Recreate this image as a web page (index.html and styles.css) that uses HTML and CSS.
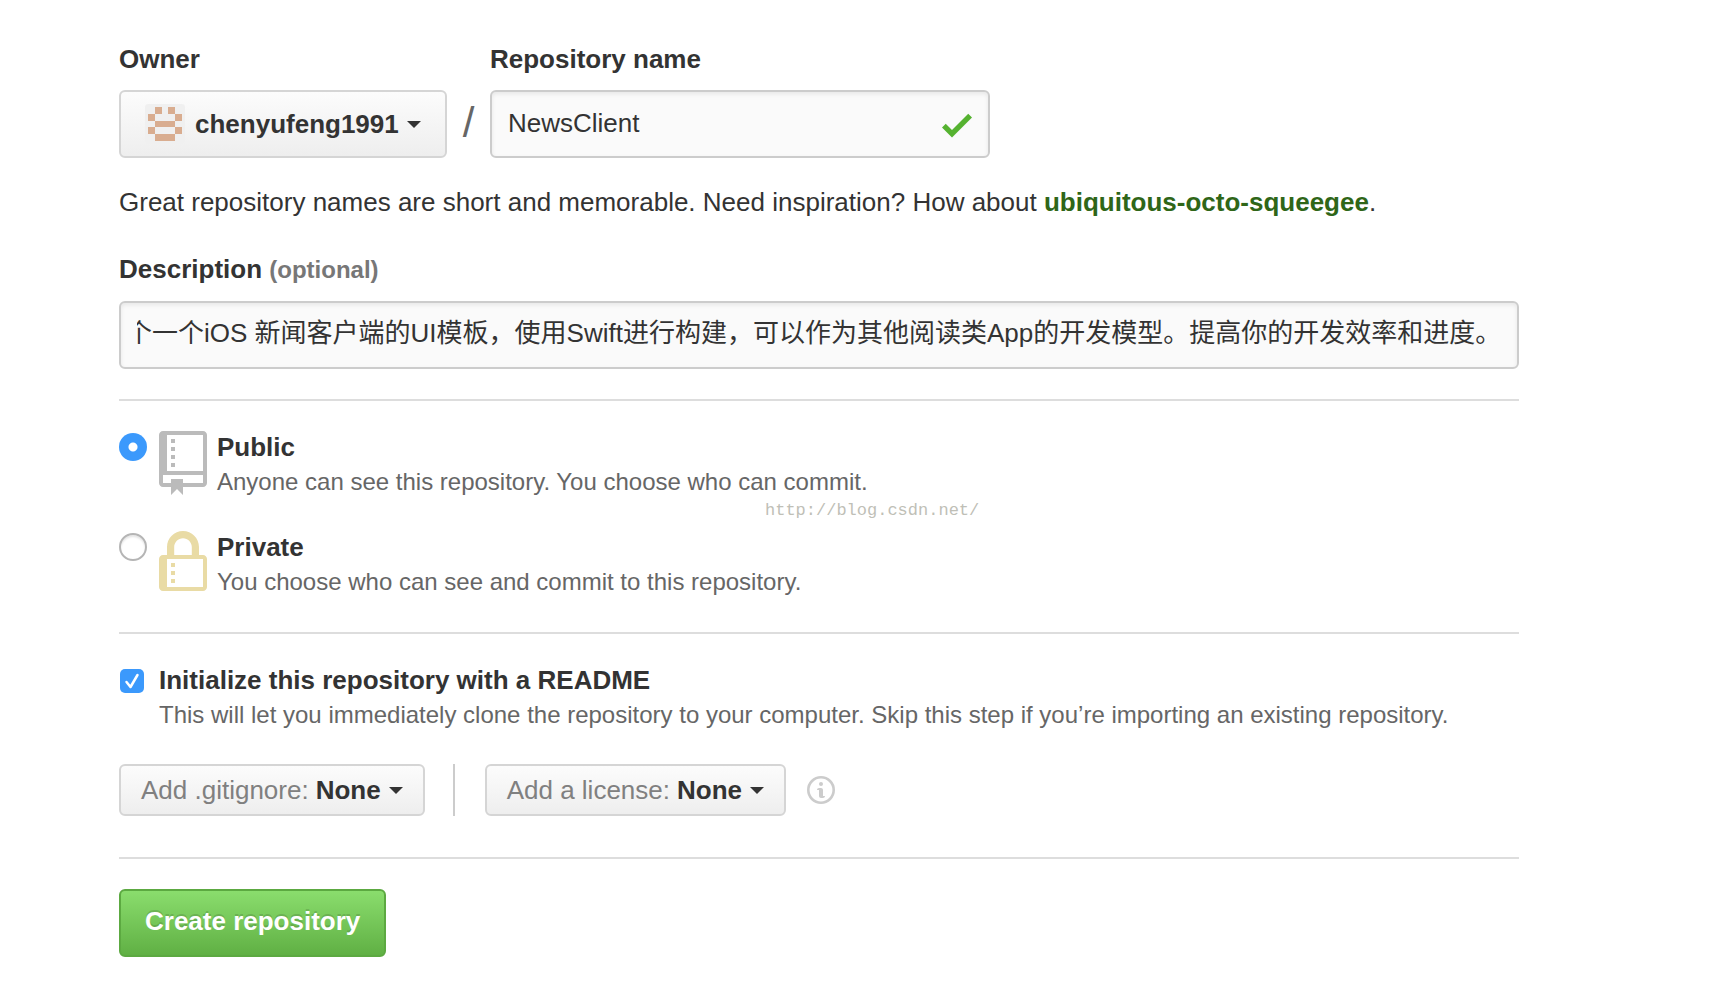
FILE: index.html
```
<!DOCTYPE html>
<html lang="en">
<head>
  <meta charset="UTF-8">
  <meta name="viewport" content="width=device-width, initial-scale=1.0">
  <title>Create a New Repository</title>
  <link rel="stylesheet" href="styles.css">
</head>
<body>

  <form class="new-repo">
    <!-- Owner and name -->
    <div class="name-row">
      <div class="field">
        <label for="owner">Owner</label>
        <div class="select-box owner-box">
          <svg class="avatar" viewBox="0 0 12 12" aria-hidden="true">
            <rect width="12" height="12" rx="1" fill="#f0f0f0"/>
            <path fill="#d9ad90" shape-rendering="crispEdges" d="M3 1h2v2H3zM7 1h2v2H7zM1 3h2v2H1zM9 3h2v2H9zM3 5h6v2H3zM1 7h2v2H1zM9 7h2v2H9zM3 9h6v2H3z"/>
          </svg>
          <select id="owner">
            <option>chenyufeng1991</option>
          </select>
        </div>
      </div>
      <span class="slash">/</span>
      <div class="field repo-field">
        <label for="repo-name">Repository name</label>
        <div class="input-wrap">
          <input type="text" id="repo-name" class="text-input" value="NewsClient">
          <svg class="check" viewBox="0 0 12 16" aria-hidden="true">
            <path d="M12 5L4 13 0 9l1.5-1.5 2.5 2.5 6.5-6.5 1.5 1.5z"/>
          </svg>
        </div>
      </div>
    </div>
    <p class="hint">Great repository names are short and memorable. Need inspiration? How about <a href="#">ubiquitous-octo-squeegee</a>.</p>

    <div class="field">
      <label for="description">Description <span class="optional">(optional)</span></label>
      <input type="text" id="description" class="text-input description-input" value="一个一个iOS 新闻客户端的UI模板，使用Swift进行构建，可以作为其他阅读类App的开发模型。提高你的开发效率和进度。">
    </div>

    <hr>

    <!-- Visibility -->
    <div class="options">
      <div class="option">
        <input type="radio" name="visibility" id="public" checked>
        <svg class="option-icon public-icon" viewBox="0 0 12 16" aria-hidden="true">
          <path d="M4 9H3V8h1v1zm0-3H3v1h1V6zm0-2H3v1h1V4zm0-2H3v1h1V2zm8-1v12c0 .55-.45 1-1 1H6v2l-1.5-1.5L3 16v-2H1c-.55 0-1-.45-1-1V1c0-.55.45-1 1-1h10c.55 0 1 .45 1 1zm-1 10H1v2h2v-1h3v1h5v-2zm0-10H2v9h9V1z"/>
        </svg>
        <div>
          <label for="public">Public</label>
          <p class="note">Anyone can see this repository. You choose who can commit.</p>
        </div>
      </div>
      <div class="option">
        <input type="radio" name="visibility" id="private">
        <svg class="option-icon private-icon" viewBox="0 0 12 16" aria-hidden="true">
          <path d="M4 13H3v-1h1v1zm8-6v7c0 .55-.45 1-1 1H1c-.55 0-1-.45-1-1V7c0-.55.45-1 1-1h1V4c0-2.2 1.8-4 4-4s4 1.8 4 4v2h1c.55 0 1 .45 1 1zM3.8 6h4.4V4c0-1.2-1-2.2-2.2-2.2S3.8 2.800 3.800 4v2zM11 7H2v7h9V7zM4 8H3v1h1V8zm0 2H3v1h1v-1z"/>
        </svg>
        <div>
          <label for="private">Private</label>
          <p class="note">You choose who can see and commit to this repository.</p>
        </div>
      </div>
      <span class="watermark">http://blog.csdn.net/</span>
    </div>

    <hr>

    <!-- Readme, gitignore and license -->
    <div class="option">
      <input type="checkbox" id="readme" checked>
      <div>
        <label for="readme">Initialize this repository with a README</label>
        <p class="note">This will let you immediately clone the repository to your computer. Skip this step if you’re importing an existing repository.</p>
      </div>
    </div>
    <div class="extras">
      <div class="select-box">
        <label for="gitignore">Add .gitignore:</label>
        <select id="gitignore">
          <option>None</option>
        </select>
      </div>
      <span class="divider"></span>
      <div class="select-box">
        <label for="license">Add a license:</label>
        <select id="license">
          <option>None</option>
        </select>
      </div>
      <svg class="info" viewBox="0 0 14 14" aria-hidden="true">
        <circle cx="7" cy="7" r="6.35" fill="none" stroke="currentColor" stroke-width="1.3"/>
        <circle cx="7" cy="4" r="1" fill="currentColor"/>
        <path fill="currentColor" d="M8 7c0-.55-.45-1-1-1H6c-.55 0-1 .45-1 1h1v3c0 .55.45 1 1 1h1c.55 0 1-.45 1-1H8V7z"/>
      </svg>
    </div>

    <hr>

    <button type="submit" class="create">Create repository</button>
  </form>

  <script>
    // Show the end of a long description
    const description = document.getElementById('description');
    description.scrollLeft = description.scrollWidth;
  </script>

</body>
</html>
```
FILE: styles.css
```
* {
  box-sizing: border-box;
}

body {
  margin: 0;
  padding: 40px 203px 40px 119px;
  background: #fff;
  color: #333;
  font-family: "Liberation Sans", "Noto Sans CJK SC", Helvetica, Arial, sans-serif;
  font-size: 26px;
  line-height: 38px;
}

p {
  margin: 0;
}

label {
  font-weight: bold;
}

input, select, button {
  margin: 0;
  font: inherit;
  color: inherit;
}

hr {
  height: 2px;
  margin: 30px 0;
  border: none;
  background: #ddd;
}

.field {
  display: flex;
  flex-direction: column;
  gap: 12px;
}

.name-row {
  display: flex;
  align-items: flex-end;
}

.repo-field {
  flex: 0 1 500px;
}

.slash {
  width: 43px;
  line-height: 66px;
  padding-bottom: 2px;
  font-size: 42px;
  text-align: center;
  color: #666;
}

.select-box {
  display: flex;
  align-items: center;
  gap: 7px;
  height: 52px;
  padding: 0 20px;
  border: 2px solid #d5d5d5;
  border-radius: 6px;
  background: linear-gradient(#fcfcfc, #eee);
}

.select-box label {
  font-weight: normal;
  color: #808080;
}

.select-box select {
  appearance: none;
  padding: 0 22px 0 0;
  border: none;
  background: url("data:image/svg+xml,%3Csvg xmlns='http://www.w3.org/2000/svg' width='14' height='7'%3E%3Cpath d='M0 0h14L7 7z' fill='%23333'/%3E%3C/svg%3E") no-repeat right center;
  font-weight: bold;
  cursor: pointer;
}

.owner-box {
  gap: 10px;
  height: 68px;
  padding: 0 24px;
}

.owner-box select {
  padding-right: 22px;
}

.avatar {
  width: 40px;
  height: 40px;
}

.input-wrap {
  position: relative;
}

.text-input {
  width: 100%;
  height: 68px;
  padding: 0 16px 2px;
  border: 2px solid #ccc;
  border-radius: 6px;
  background: #fafafa;
  box-shadow: inset 0 2px 4px rgba(0, 0, 0, 0.08);
}

.description-input {
  padding-bottom: 10px;
}

/* sits over the right end of the name box */
.check {
  position: absolute;
  top: 15px;
  right: 18px;
  width: 30px;
  height: 40px;
  fill: #55b230;
}

.hint {
  margin: 25px 0 29px;
}

.hint a {
  font-weight: bold;
  color: #2f6618;
  text-decoration: none;
}

.optional {
  font-size: 24px;
  color: #777;
}

.options {
  position: relative;
  display: flex;
  flex-direction: column;
  gap: 30px;
  margin-bottom: 31px;
}

.option {
  display: flex;
  align-items: flex-start;
}

.option label {
  display: block;
  line-height: 32px;
}

.note {
  font-size: 24px;
  line-height: 38px;
  color: #666;
}

.option input {
  appearance: none;
  flex: none;
  margin-top: 2px;
}

.option input[type="radio"] {
  width: 28px;
  height: 28px;
  margin-right: 12px;
  border: 2px solid #b5b5b5;
  border-radius: 50%;
  background: #fff;
  box-shadow: inset 0 2px 2px rgba(0, 0, 0, 0.1);
}

.option input[type="radio"]:checked {
  border: none;
  background: radial-gradient(circle, #fff 4px, #3b99fc 5px);
  box-shadow: none;
}

.option input[type="checkbox"] {
  width: 24px;
  height: 24px;
  margin: 5px 15px 0 1px;
  border-radius: 5px;
  background: #3b99fc url("data:image/svg+xml,%3Csvg xmlns='http://www.w3.org/2000/svg' width='24' height='24'%3E%3Cpath d='M6.5 13l4 5 7-12' fill='none' stroke='%23fff' stroke-width='2.5' stroke-linecap='round' stroke-linejoin='round'/%3E%3C/svg%3E") center;
}

.option-icon {
  flex: none;
  width: 48px;
  height: 64px;
  margin-right: 10px;
}

.public-icon {
  fill: #bbb;
}

.private-icon {
  fill: #e9dba5;
}

.watermark {
  position: absolute;
  top: 61px;
  left: 646px;
  font-family: "Liberation Mono", monospace;
  font-size: 17px;
  color: #bfbfb7;
}

.extras {
  display: flex;
  align-items: center;
  margin: 30px 0 41px;
}

.divider {
  width: 2px;
  height: 52px;
  margin: 0 30px 0 28px;
  background: #ccc;
}

.info {
  width: 28px;
  height: 28px;
  margin-left: 21px;
  color: #ccc;
}

.create {
  height: 68px;
  padding: 0 24px 4px;
  border: 2px solid #5ca941;
  border-radius: 6px;
  background: linear-gradient(#8add6d, #60b044);
  color: #fff;
  font-weight: bold;
  text-shadow: 0 -2px 0 rgba(0, 0, 0, 0.15);
  cursor: pointer;
}
```
